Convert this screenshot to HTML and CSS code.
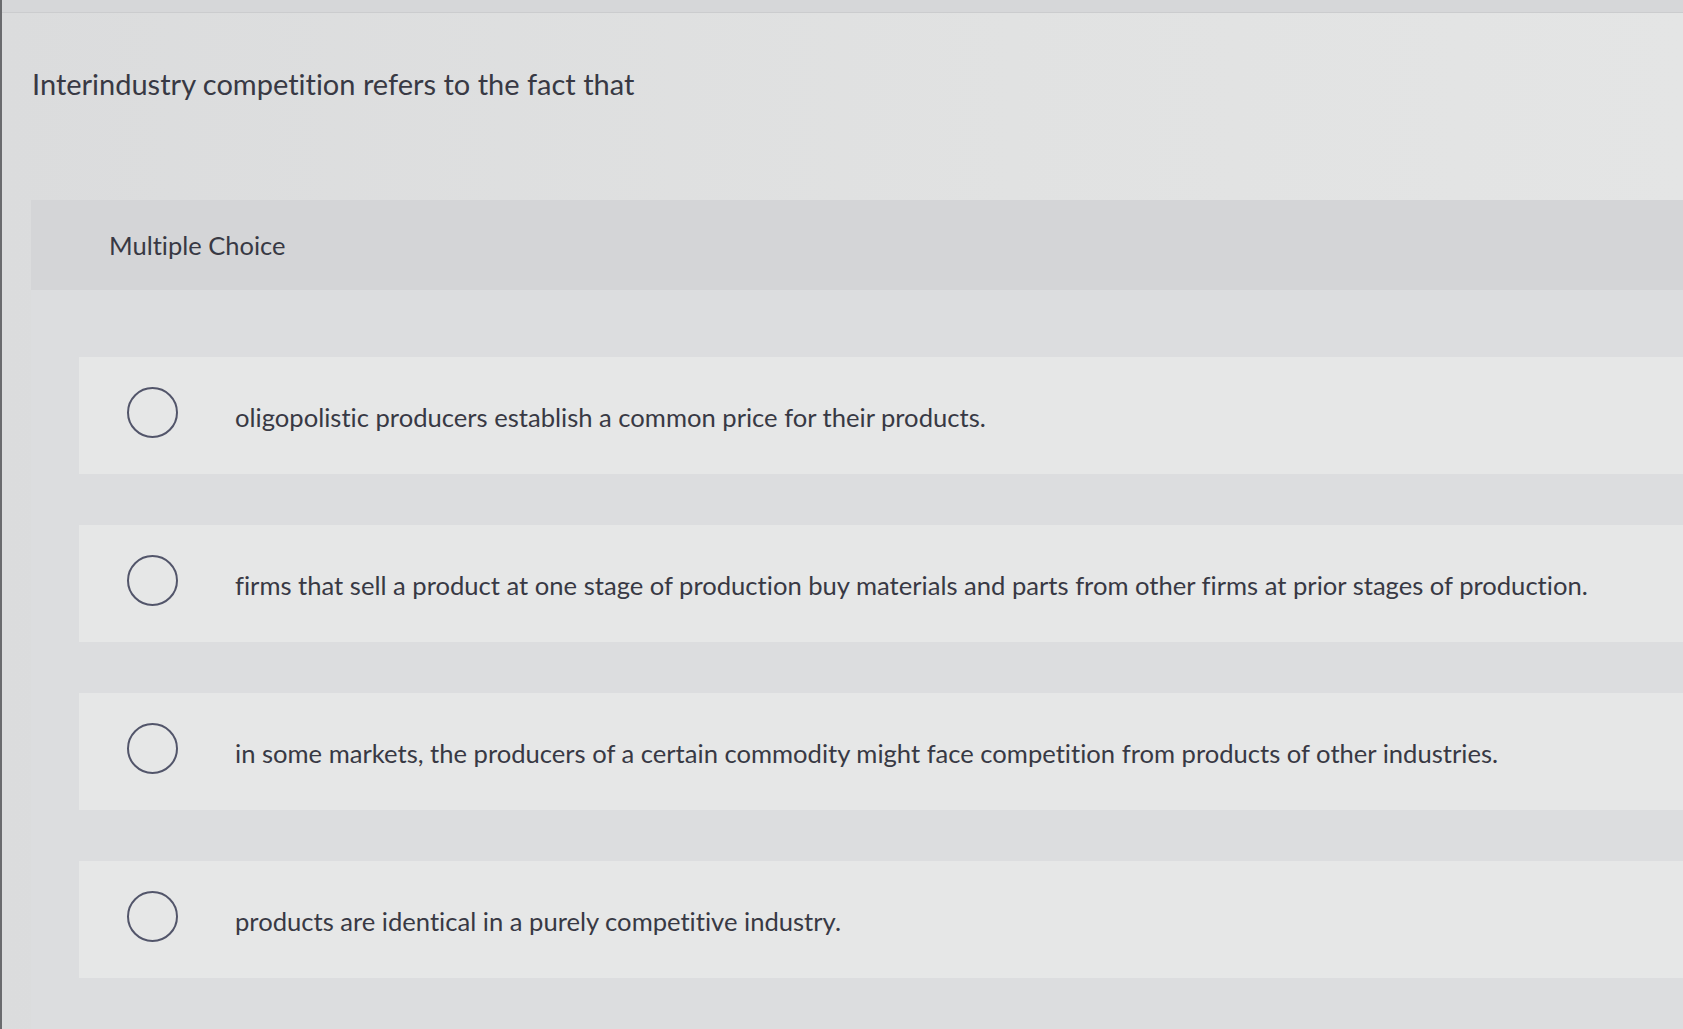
FILE: index.html
```html
<!DOCTYPE html>
<html lang="en">
<head>
<meta charset="utf-8">
<title>Interindustry competition</title>
<link rel="stylesheet" href="styles.css">
</head>
<body>
<div class="page">
  <div class="topbar"></div>
  <h1 class="question">Interindustry competition refers to the fact that</h1>
  <section class="mc">
    <div class="mc-head">Multiple Choice</div>
    <div class="mc-body">
      <label class="option"><span class="radio"></span><span class="opt-text">oligopolistic producers establish a common price for their products.</span></label>
      <label class="option"><span class="radio"></span><span class="opt-text">firms that sell a product at one stage of production buy materials and parts from other firms at prior stages of production.</span></label>
      <label class="option"><span class="radio"></span><span class="opt-text">in some markets, the producers of a certain commodity might face competition from products of other industries.</span></label>
      <label class="option"><span class="radio"></span><span class="opt-text">products are identical in a purely competitive industry.</span></label>
    </div>
  </section>
</div>
</body>
</html>
```
FILE: styles.css
```css
html, body {
  margin: 0;
  padding: 0;
  height: 100%;
  overflow: hidden;
}
body {
  background: #dedfe0;
  font-family: Lato, "Open Sans", "Liberation Sans", sans-serif;
  font-variant-ligatures: none;
  color: #383944;
}
.page {
  min-height: 100%;
  border-left: 2px solid #6a6b6e;
  background: linear-gradient(90deg, #dbdcdd 0%, #e1e2e2 60%, #e4e5e5 100%);
}
.topbar {
  height: 12px;
  background: #d6d7d9;
  border-bottom: 1px solid #cbccce;
}
.question {
  margin: 0;
  padding: 55px 0 0 30px;
  font-size: 29px;
  line-height: 32px;
  font-weight: 400;
}
.mc {
  margin: 100px 0 0 29px;
  background: #dcdddf;
}
.mc-head {
  height: 90px;
  display: flex;
  align-items: center;
  padding-left: 78px;
  background: #d4d5d7;
  font-size: 25.5px;
}
.mc-body {
  display: flex;
  flex-direction: column;
  gap: 51px;
  padding: 67px 0 60px 48px;
}
.option {
  height: 117px;
  display: flex;
  align-items: center;
  background: #e6e7e7;
  padding-left: 48px;
}
.radio {
  width: 47px;
  height: 47px;
  border: 2px solid #52556a;
  border-radius: 50%;
  flex: none;
  margin-top: -6px;
}
.opt-text {
  margin-left: 57px;
  font-size: 25.6px;
  padding-top: 3px;
}
```
